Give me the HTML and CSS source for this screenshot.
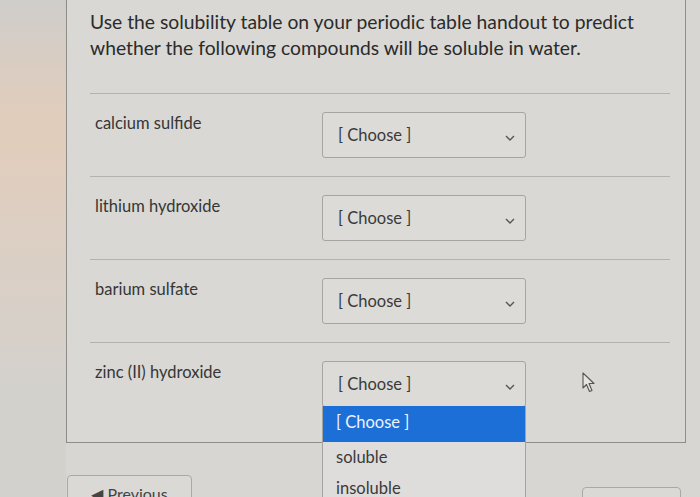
FILE: index.html
```html
<!DOCTYPE html>
<html lang="en">
<head>
  <meta charset="UTF-8">
  <title>Quiz</title>
  <link rel="stylesheet" href="styles.css">
</head>
<body>
  <div class="screen">
    <div class="gutter"></div>
    <div class="main">
      <div class="quiz">
        <p class="prompt">Use the solubility table on your periodic table handout to predict whether the following compounds will be soluble in water.</p>
        <div class="answers">
          <div class="answer">
            <span class="label">calcium sulfide</span>
            <div class="select">
              <span>[ Choose ]</span>
              <svg class="chev" width="10" height="6" viewBox="0 0 10 6"><polyline points="1,1 5,5 9,1" fill="none" stroke="#555" stroke-width="1.4"/></svg>
            </div>
          </div>
          <div class="answer">
            <span class="label">lithium hydroxide</span>
            <div class="select">
              <span>[ Choose ]</span>
              <svg class="chev" width="10" height="6" viewBox="0 0 10 6"><polyline points="1,1 5,5 9,1" fill="none" stroke="#555" stroke-width="1.4"/></svg>
            </div>
          </div>
          <div class="answer">
            <span class="label">barium sulfate</span>
            <div class="select">
              <span>[ Choose ]</span>
              <svg class="chev" width="10" height="6" viewBox="0 0 10 6"><polyline points="1,1 5,5 9,1" fill="none" stroke="#555" stroke-width="1.4"/></svg>
            </div>
          </div>
          <div class="answer">
            <span class="label">zinc (II) hydroxide</span>
            <div class="select open">
              <span>[ Choose ]</span>
              <svg class="chev" width="10" height="6" viewBox="0 0 10 6"><polyline points="1,1 5,5 9,1" fill="none" stroke="#555" stroke-width="1.4"/></svg>
              <ul class="options">
                <li class="active">[ Choose ]</li>
                <li>soluble</li>
                <li>insoluble</li>
              </ul>
            </div>
            <svg class="cursor" width="16" height="22" viewBox="0 0 16 22">
              <path d="M1 1 L1 16 L4.5 12.5 L7.5 19.5 L10 18.5 L7 11.5 L12 11.5 Z" fill="#e4e4e2" stroke="#555" stroke-width="1.1" stroke-linejoin="round"/>
            </svg>
          </div>
        </div>
      </div>
      <div class="nav">
        <button class="btn prev">&#9664; Previous</button>
        <button class="btn next">Next &#9654;</button>
      </div>
    </div>
  </div>
</body>
</html>
```

FILE: styles.css
```css
body, ul, li, p {
  margin: 0;
  padding: 0;
  list-style: none;
}

body {
  background-color: #d7d6d2;
  font-family: Lato, "Open Sans", sans-serif;
  color: #333;
  overflow: hidden;
}

.screen {
  display: flex;
  height: 497px;
  overflow: hidden;
}

.gutter {
  width: 66px;
  flex-shrink: 0;
  background: linear-gradient(to bottom, #cfcdca 0, #dacdc2 70px, #e2cdbb 130px, #dccfc4 240px, #d4d1cc 380px, #d2d1cd 497px);
}

.main {
  flex: 1;
  padding-right: 14px;
  display: flex;
  flex-direction: column;
}

.quiz {
  border: 1px solid #8e8d8a;
  border-top: none;
  padding: 9px 15px 17px 23px;
  background-color: #d9d8d4;
}

.prompt {
  font-size: 19.3px;
  line-height: 26px;
  color: #2b2b2b;
  padding-right: 10px;
}

.answers {
  margin-top: 32px;
}

.answer {
  position: relative;
  display: flex;
  align-items: flex-start;
  border-top: 1px solid #b3b2ae;
  padding: 18px 0;
}

.label {
  width: 227px;
  padding-left: 5px;
  margin-top: 1px;
  font-size: 16.5px;
  line-height: 20px;
  color: #363636;
}

.select {
  position: relative;
  width: 204px;
  height: 46px;
  box-sizing: border-box;
  border: 1px solid #a6a5a2;
  border-radius: 3px;
  background-color: #dcdbd8;
  display: flex;
  align-items: center;
  justify-content: space-between;
  padding: 0 10px 0 15px;
  font-size: 16.5px;
  color: #3a3a3a;
}

.chev {
  margin-top: 6px;
}

.options {
  position: absolute;
  top: 44px;
  left: -1px;
  right: -1px;
  background-color: #dedddb;
  border-left: 1px solid #a3a2a0;
  border-right: 1px solid #a3a2a0;
  font-size: 16.5px;
  color: #3a3a3a;
}

.options li {
  height: 31px;
  line-height: 31px;
  padding-left: 13px;
}

.options li.active {
  height: 36px;
  line-height: 32px;
  background-color: #1c6fd6;
  color: #edf3ff;
}

.cursor {
  position: absolute;
  left: 492px;
  top: 29px;
}

.nav {
  display: flex;
  justify-content: space-between;
  align-items: flex-start;
  margin-top: 32px;
  padding-right: 5px;
}

.btn {
  font-family: Lato, "Open Sans", sans-serif;
  font-size: 16px;
  line-height: 20px;
  color: #444;
  background-color: #dad9d6;
  border: 1px solid #aaa9a6;
  border-radius: 4px;
  margin-left: 1px;
  padding: 8px 18px;
  height: 38px;
}

.prev {
  width: 125px;
}

.next {
  width: 99px;
  margin-top: 12px;
}
```
